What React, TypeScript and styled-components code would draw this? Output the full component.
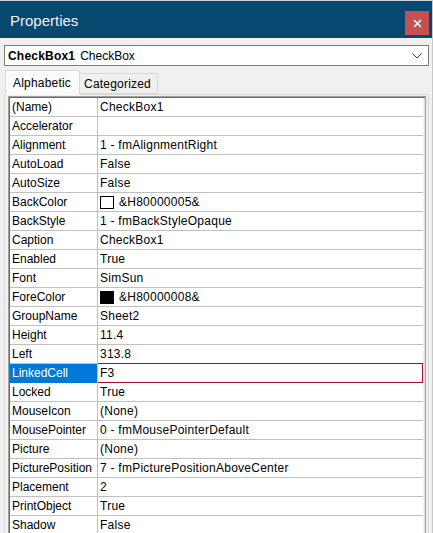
import styled, { createGlobalStyle } from "styled-components";

const GlobalStyle = createGlobalStyle`
  html, body {
    margin: 0;
    padding: 0;
    background: #f0f0f0;
  }
  body {
    font-family: "Liberation Sans", Arial, sans-serif;
    font-size: 12px;
    color: #000;
  }
`;

type Prop = {
  name: string;
  value: string;
  swatch?: string;
  selected?: boolean;
};

const props: Prop[] = [
  { name: "(Name)", value: "CheckBox1" },
  { name: "Accelerator", value: "" },
  { name: "Alignment", value: "1 - fmAlignmentRight" },
  { name: "AutoLoad", value: "False" },
  { name: "AutoSize", value: "False" },
  { name: "BackColor", value: "&H80000005&", swatch: "#fff" },
  { name: "BackStyle", value: "1 - fmBackStyleOpaque" },
  { name: "Caption", value: "CheckBox1" },
  { name: "Enabled", value: "True" },
  { name: "Font", value: "SimSun" },
  { name: "ForeColor", value: "&H80000008&", swatch: "#000" },
  { name: "GroupName", value: "Sheet2" },
  { name: "Height", value: "11.4" },
  { name: "Left", value: "313.8" },
  { name: "LinkedCell", value: "F3", selected: true },
  { name: "Locked", value: "True" },
  { name: "MouseIcon", value: "(None)" },
  { name: "MousePointer", value: "0 - fmMousePointerDefault" },
  { name: "Picture", value: "(None)" },
  { name: "PicturePosition", value: "7 - fmPicturePositionAboveCenter" },
  { name: "Placement", value: "2" },
  { name: "PrintObject", value: "True" },
  { name: "Shadow", value: "False" },
];

const Window = styled.div`
  width: 433px;
  height: 533px;
  overflow: hidden;
  display: flex;
  flex-direction: column;
  background: #f0f0f0;
  box-sizing: border-box;
  border-right: 1px solid #c8c8c8;
`;

const TitleBar = styled.div`
  height: 38px;
  box-sizing: border-box;
  border-top: 1px solid #c9d6e0;
  background: #074870;
  color: #fff;
  display: flex;
  justify-content: space-between;
  padding: 0 3px 0 10px;
  flex-shrink: 0;
`;

const Title = styled.div`
  font-size: 15px;
  line-height: 39px;
  color: #f2f2f2;
`;

const CloseButton = styled.div`
  width: 24px;
  height: 24px;
  margin-top: 10px;
  background: #c75050;
  display: flex;
  align-items: center;
  justify-content: center;
`;

const Body = styled.div`
  flex: 1;
  display: flex;
  flex-direction: column;
  padding: 7px 3px 0 4px;
  min-height: 0;
`;

const ObjectSelect = styled.div`
  height: 21px;
  box-sizing: border-box;
  border: 1px solid #7a7a7a;
  background: #fff;
  display: flex;
  align-items: center;
  padding: 0 6px 0 3px;
  font-size: 12px;
`;

const ObjectName = styled.b`
  font-weight: bold;
  margin-right: 5px;
  letter-spacing: 0.2px;
`;

const Chevron = styled.svg`
  margin-left: auto;
`;

const TabRow = styled.div`
  display: flex;
  align-items: flex-end;
  margin-top: 4px;
  height: 24px;
  padding-left: 1px;
  position: relative;
  z-index: 1;
`;

const Tab = styled.div<{ $active?: boolean }>`
  box-sizing: border-box;
  border: 1px solid #d9d9d9;
  font-size: 12px;
  display: flex;
  align-items: center;
  padding: ${(p) => (p.$active ? "0 8px 0 7px" : "0 6px 0 4px")};
  height: ${(p) => (p.$active ? "25px" : "21px")};
  margin-bottom: ${(p) => (p.$active ? "-1px" : "0")};
  background: ${(p) => (p.$active ? "#fbfbfb" : "#f0f0f0")};
  border-bottom: ${(p) => (p.$active ? "1px solid #fbfbfb" : "1px solid #d9d9d9")};
  margin-left: ${(p) => (p.$active ? "0" : "-1px")};
  letter-spacing: 0.2px;
`;

const Panel = styled.div`
  flex: 1;
  border: 1px solid #d9d9d9;
  border-bottom: none;
  padding: 1px 2px 0 3px;
  min-height: 0;
`;

const Grid = styled.div`
  border: 1px solid #a0a0a0;
  border-bottom: none;
  box-shadow: inset 1px 1px 0 #696969, inset -1px 0 0 #e3e3e3;
  padding: 1px 2px 0 1px;
  height: 100%;
  box-sizing: border-box;
`;

const Row = styled.div`
  display: grid;
  grid-template-columns: 88px 1fr;
  height: 19px;
  box-sizing: border-box;
  border-bottom: 1px solid #c0c0c0;
  background: #fff;
  line-height: 18px;
  white-space: nowrap;
`;

const NameCell = styled.div<{ $selected?: boolean }>`
  border-right: 1px solid #c0c0c0;
  padding-left: 2px;
  overflow: hidden;
  background: ${(p) => (p.$selected ? "#0078d7" : "#fff")};
  color: ${(p) => (p.$selected ? "#fff" : "#000")};
`;

const ValueCell = styled.div<{ $selected?: boolean }>`
  padding-left: 2px;
  overflow: hidden;
  display: flex;
  align-items: center;
  box-sizing: border-box;
  letter-spacing: 0.25px;
  margin-top: ${(p) => (p.$selected ? "-1px" : "0")};
  height: ${(p) => (p.$selected ? "20px" : "18px")};
  border: ${(p) => (p.$selected ? "1px solid #a0102a" : "none")};
  border-left: none;
`;

const Swatch = styled.span<{ $color: string }>`
  display: inline-block;
  width: 14px;
  height: 13px;
  box-sizing: border-box;
  border: 1px solid #000;
  background: ${(p) => p.$color};
  margin-right: 5px;
`;

export default function App() {
  return (
    <>
      <GlobalStyle />
      <Window>
        <TitleBar>
          <Title>Properties</Title>
          <CloseButton>
            <svg width="9" height="9" viewBox="0 0 9 9">
              <path d="M1 1L8 8M8 1L1 8" stroke="#fff" strokeWidth="1.6" />
            </svg>
          </CloseButton>
        </TitleBar>
        <Body>
          <ObjectSelect>
            <ObjectName>CheckBox1</ObjectName>
            <span>CheckBox</span>
            <Chevron width="10" height="6" viewBox="0 0 10 6">
              <path d="M0.5 0.5L5 5L9.5 0.5" fill="none" stroke="#333" strokeWidth="1" />
            </Chevron>
          </ObjectSelect>
          <TabRow>
            <Tab $active>Alphabetic</Tab>
            <Tab>Categorized</Tab>
          </TabRow>
          <Panel>
            <Grid>
              {props.map((p) => (
                <Row key={p.name}>
                  <NameCell $selected={p.selected}>{p.name}</NameCell>
                  <ValueCell $selected={p.selected}>
                    {p.swatch && <Swatch $color={p.swatch} />}
                    {p.value}
                  </ValueCell>
                </Row>
              ))}
            </Grid>
          </Panel>
        </Body>
      </Window>
    </>
  );
}
